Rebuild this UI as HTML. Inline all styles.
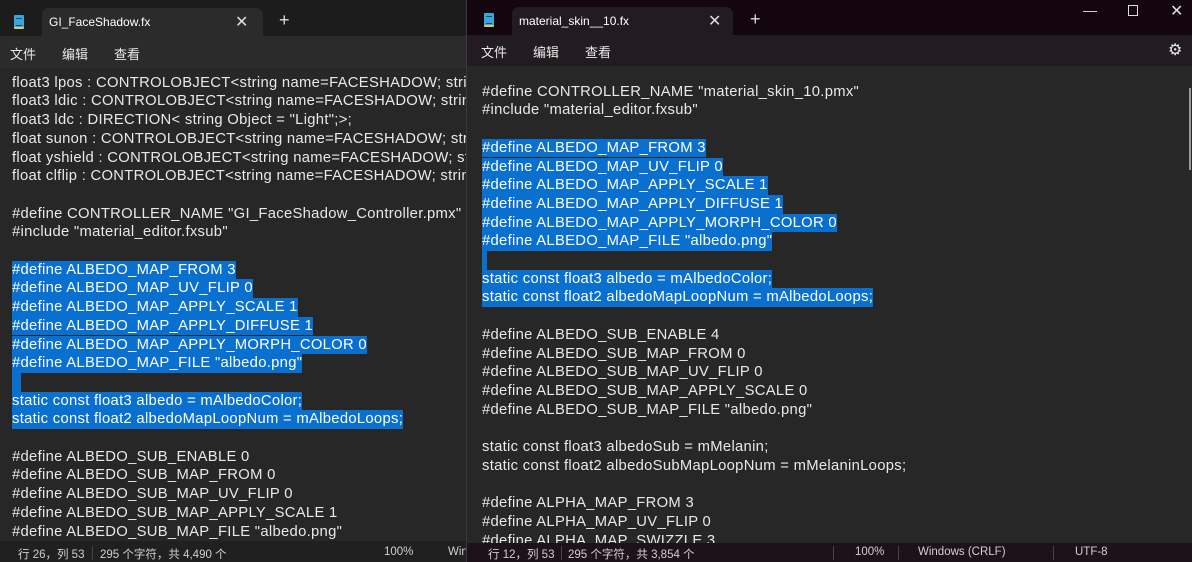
<!DOCTYPE html>
<html><head><meta charset="utf-8"><style>
*{margin:0;padding:0;box-sizing:border-box}
body{width:1192px;height:562px;overflow:hidden;background:#202020;font-family:"Liberation Sans","Noto Sans CJK SC",sans-serif;color:#e6e6e6;position:relative}
.abs{position:absolute}
.ln{position:absolute;white-space:pre;font-size:14.8px;line-height:18.7px;height:18.7px;color:#e8e8e8;letter-spacing:0.3px}
.sel{background:#0a70d0;color:#fff}
.menu span{position:absolute;font-size:13px;color:#e8e8e8}
.st{position:absolute;font-size:11.5px;color:#cfcfcf;top:546px}
.sep{position:absolute;width:1px;height:14px;background:#444;top:546px}
.icon{position:absolute;width:10px;height:14px;background:#38a6d8;border-radius:1px;border-bottom:2px solid #e8c070}
.icon:before{content:"";position:absolute;left:2px;right:2px;top:3px;height:6px;border-top:1px solid #0d4f70;border-bottom:1px solid #0d4f70}
</style></head><body>
<!-- LEFT WINDOW -->
<div class="abs" style="left:0;top:0;width:467px;height:36px;background:#1c1c1c"></div>
<div class="abs" style="left:42px;top:8px;width:221px;height:29px;background:#2b2b2b;border-radius:7px 7px 0 0"></div>
<div class="icon" style="left:14px;top:15px"></div>
<div class="abs" style="left:49px;top:15px;font-size:12px;color:#fff">GI_FaceShadow.fx</div>
<div class="abs" style="left:235px;top:12px;font-size:16px;color:#ddd">✕</div>
<div class="abs" style="left:279px;top:10px;font-size:18px;color:#ddd">+</div>
<div class="abs menu" style="left:0;top:36px;width:467px;height:32px;background:#2b2b2b"><span style="left:10px;top:8px">文件</span><span style="left:62px;top:8px">编辑</span><span style="left:114px;top:8px">查看</span></div>
<div class="abs" style="left:0;top:68px;width:467px;height:473px;background:#272727;overflow:hidden">
<div class="ln" style="left:12px;top:-13px">float3 ...   ...                              ...</div>
<div class="ln" style="left:12px;top:5.7px">float3 lpos : CONTROLOBJECT&lt;string name=FACESHADOW; string item</div>
<div class="ln" style="left:12px;top:24.4px">float3 ldic : CONTROLOBJECT&lt;string name=FACESHADOW; string item</div>
<div class="ln" style="left:12px;top:43.1px">float3 ldc : DIRECTION&lt; string Object = "Light";&gt;;</div>
<div class="ln" style="left:12px;top:61.8px">float sunon : CONTROLOBJECT&lt;string name=FACESHADOW; string item</div>
<div class="ln" style="left:12px;top:80.5px">float yshield : CONTROLOBJECT&lt;string name=FACESHADOW; string item</div>
<div class="ln" style="left:12px;top:99.2px">float clflip : CONTROLOBJECT&lt;string name=FACESHADOW; string item</div>
<div class="ln" style="left:12px;top:136.6px">#define CONTROLLER_NAME "GI_FaceShadow_Controller.pmx"</div>
<div class="ln" style="left:12px;top:155.3px">#include "material_editor.fxsub"</div>
<div class="ln sel" style="left:12px;top:192.7px">#define ALBEDO_MAP_FROM 3</div>
<div class="ln sel" style="left:12px;top:211.4px">#define ALBEDO_MAP_UV_FLIP 0</div>
<div class="ln sel" style="left:12px;top:230.1px">#define ALBEDO_MAP_APPLY_SCALE 1</div>
<div class="ln sel" style="left:12px;top:248.8px">#define ALBEDO_MAP_APPLY_DIFFUSE 1</div>
<div class="ln sel" style="left:12px;top:267.5px">#define ALBEDO_MAP_APPLY_MORPH_COLOR 0</div>
<div class="ln sel" style="left:12px;top:286.2px">#define ALBEDO_MAP_FILE "albedo.png"</div>
<div class="ln sel" style="left:12px;top:304.9px">  </div>
<div class="ln sel" style="left:12px;top:323.6px">static const float3 albedo = mAlbedoColor;</div>
<div class="ln sel" style="left:12px;top:342.3px">static const float2 albedoMapLoopNum = mAlbedoLoops;</div>
<div class="ln" style="left:12px;top:379.7px">#define ALBEDO_SUB_ENABLE 0</div>
<div class="ln" style="left:12px;top:398.4px">#define ALBEDO_SUB_MAP_FROM 0</div>
<div class="ln" style="left:12px;top:417.1px">#define ALBEDO_SUB_MAP_UV_FLIP 0</div>
<div class="ln" style="left:12px;top:435.8px">#define ALBEDO_SUB_MAP_APPLY_SCALE 1</div>
<div class="ln" style="left:12px;top:454.5px">#define ALBEDO_SUB_MAP_FILE "albedo.png"</div>
</div>
<div class="abs" style="left:0;top:541px;width:467px;height:21px;background:#202020"></div>
<div class="st" style="left:18px">行 26，列 53</div><div class="sep" style="left:92px"></div>
<div class="st" style="left:100px">295 个字符，共 4,490 个</div>
<div class="st" style="left:384px">100%</div><div class="st" style="left:448px">Win</div>

<!-- RIGHT WINDOW -->
<div class="abs" style="left:466px;top:0;width:726px;height:562px;background:#13060e;border-left:1px solid #3a3a3a"></div>
<div class="abs" style="left:512px;top:7px;width:221px;height:28px;background:#221b20;border-radius:7px 7px 0 0"></div>
<div class="icon" style="left:484px;top:13px"></div>
<div class="abs" style="left:519px;top:14px;font-size:12px;color:#fff">material_skin__10.fx</div>
<div class="abs" style="left:708px;top:11px;font-size:16px;color:#ddd">✕</div>
<div class="abs" style="left:750px;top:9px;font-size:18px;color:#ddd">+</div>
<div class="abs" style="left:1083px;top:2px;font-size:14px;color:#ddd">—</div>
<div class="abs" style="left:1128px;top:5px;width:10px;height:11px;border:1px solid #ddd"></div>
<div class="abs" style="left:1170px;top:1px;font-size:16px;color:#ddd">✕</div>
<div class="abs menu" style="left:467px;top:35px;width:725px;height:31px;background:#221b20"><span style="left:14px;top:7px">文件</span><span style="left:66px;top:7px">编辑</span><span style="left:118px;top:7px">查看</span><span style="left:701px;top:5px;font-size:16px">⚙</span></div>
<div class="abs" style="left:467px;top:66px;width:725px;height:477px;background:#272727;overflow:hidden">
<div class="abs" style="right:1px;top:22px;width:2px;height:82px;background:#9a9a9a"></div>
<div class="ln" style="left:15px;top:16.7px">#define CONTROLLER_NAME "material_skin_10.pmx"</div>
<div class="ln" style="left:15px;top:35.4px">#include "material_editor.fxsub"</div>
<div class="ln sel" style="left:15px;top:72.8px">#define ALBEDO_MAP_FROM 3</div>
<div class="ln sel" style="left:15px;top:91.5px">#define ALBEDO_MAP_UV_FLIP 0</div>
<div class="ln sel" style="left:15px;top:110.2px">#define ALBEDO_MAP_APPLY_SCALE 1</div>
<div class="ln sel" style="left:15px;top:128.9px">#define ALBEDO_MAP_APPLY_DIFFUSE 1</div>
<div class="ln sel" style="left:15px;top:147.6px">#define ALBEDO_MAP_APPLY_MORPH_COLOR 0</div>
<div class="ln sel" style="left:15px;top:166.3px">#define ALBEDO_MAP_FILE "albedo.png"</div>
<div class="ln sel" style="left:15px;top:185px;width:5px"></div>
<div class="ln sel" style="left:15px;top:203.7px">static const float3 albedo = mAlbedoColor;</div>
<div class="ln sel" style="left:15px;top:222.4px">static const float2 albedoMapLoopNum = mAlbedoLoops;</div>
<div class="ln" style="left:15px;top:259.8px">#define ALBEDO_SUB_ENABLE 4</div>
<div class="ln" style="left:15px;top:278.5px">#define ALBEDO_SUB_MAP_FROM 0</div>
<div class="ln" style="left:15px;top:297.2px">#define ALBEDO_SUB_MAP_UV_FLIP 0</div>
<div class="ln" style="left:15px;top:315.9px">#define ALBEDO_SUB_MAP_APPLY_SCALE 0</div>
<div class="ln" style="left:15px;top:334.6px">#define ALBEDO_SUB_MAP_FILE "albedo.png"</div>
<div class="ln" style="left:15px;top:372px">static const float3 albedoSub = mMelanin;</div>
<div class="ln" style="left:15px;top:390.7px">static const float2 albedoSubMapLoopNum = mMelaninLoops;</div>
<div class="ln" style="left:15px;top:428.1px">#define ALPHA_MAP_FROM 3</div>
<div class="ln" style="left:15px;top:446.8px">#define ALPHA_MAP_UV_FLIP 0</div>
<div class="ln" style="left:15px;top:465.5px">#define ALPHA_MAP_SWIZZLE 3</div>
</div>
<div class="abs" style="left:467px;top:543px;width:725px;height:19px;background:#1d1219"></div>
<div class="st" style="left:488px">行 12，列 53</div><div class="sep" style="left:561px"></div>
<div class="st" style="left:568px">295 个字符，共 3,854 个</div>
<div class="sep" style="left:833px"></div>
<div class="st" style="left:855px">100%</div><div class="sep" style="left:898px"></div>
<div class="st" style="left:918px">Windows (CRLF)</div><div class="sep" style="left:1053px"></div>
<div class="st" style="left:1075px">UTF-8</div>
</body></html>
